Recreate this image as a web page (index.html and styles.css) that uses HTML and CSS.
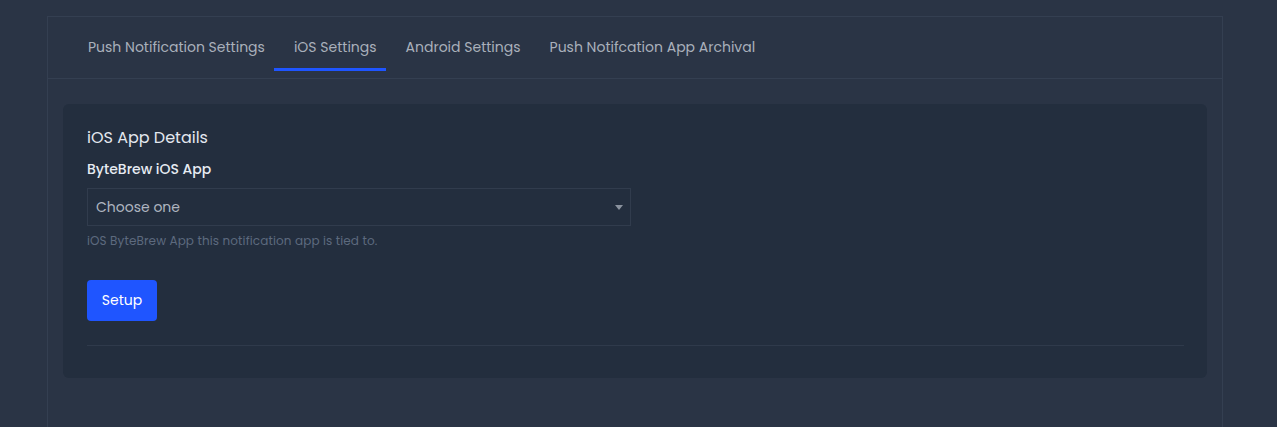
FILE: index.html
```html
<!DOCTYPE html>
<html lang="en">
<head>
    <meta charset="UTF-8">
    <meta name="viewport" content="width=device-width, initial-scale=1.0">
    <title>Push Notification App</title>
    <link rel="stylesheet" href="styles.css">
</head>
<body>
    <div class="panel">
        <nav class="tabs">
            <a class="tab" href="#">Push Notification Settings</a>
            <a class="tab active" href="#">iOS Settings</a>
            <a class="tab" href="#">Android Settings</a>
            <a class="tab" href="#">Push Notifcation App Archival</a>
        </nav>

        <div class="tab-body">
            <div class="card">
                <h3 class="card-title">iOS App Details</h3>
                <label class="field-label" for="ios-app">ByteBrew iOS App</label>
                <div class="select-wrap">
                    <select id="ios-app">
                        <option>Choose one</option>
                    </select>
                    <svg class="caret" width="8" height="5" viewBox="0 0 8 5">
                        <path d="M0 0h8L4 5z" fill="#8a929e"/>
                    </svg>
                </div>
                <p class="help">iOS ByteBrew App this notification app is tied to.</p>
                <button class="btn-primary" type="button">Setup</button>
                <hr class="divider">
            </div>
        </div>
    </div>
</body>
</html>
```

FILE: styles.css
```css
body {
    margin: 0;
    background-color: #2a3445;
    font-family: "Poppins", "Inter", "Noto Sans", sans-serif;
    color: #c9d0da;
    height: 427px;
    overflow: hidden;
}
.panel {
    margin: 16px 0 0 47px;
    width: 1174px;
    height: 410px;
    border: 1px solid #343f51;
    border-bottom: none;
}
.tabs {
    display: flex;
    padding: 0 0 7px 20px;
    border-bottom: 1px solid #343f51;
}
.tab {
    display: block;
    padding: 20px 9px 10px 20px;
    font-size: 14px;
    line-height: 21px;
    color: #a9b0bb;
    text-decoration: none;
    border-bottom: 3px solid transparent;
}
.tab.active {
    border-bottom-color: #1f55ff;
}
.tab-body {
    padding: 25px 15px 0 15px;
}
.card {
    background-color: #232e3e;
    border-radius: 6px;
    padding: 22px 23px 32px 24px;
}
.card-title {
    margin: 0;
    font-size: 16px;
    line-height: 24px;
    font-weight: 400;
    color: #e3e8ef;
}
.field-label {
    display: block;
    margin: 7px 0 7px;
    font-size: 14px;
    line-height: 24px;
    font-weight: 500;
    color: #e6ebf2;
}
.select-wrap {
    position: relative;
    width: 544px;
}
.select-wrap select {
    display: block;
    width: 100%;
    height: 38px;
    padding: 0 8px;
    background: #232e3e;
    border: 1px solid #313c4d;
    border-radius: 0;
    color: #aeb5c0;
    font-family: inherit;
    font-size: 14px;
    appearance: none;
    -webkit-appearance: none;
    outline: none;
}
.caret {
    position: absolute;
    right: 8px;
    top: 17px;
}
.help {
    margin: 6px 0 0;
    font-size: 12px;
    line-height: 18px;
    letter-spacing: 0.12px;
    color: #5d6a7e;
}
.btn-primary {
    display: block;
    margin-top: 30px;
    width: 70px;
    height: 41px;
    background-color: #1f55ff;
    border: none;
    border-radius: 4px;
    color: #fff;
    font-family: inherit;
    font-size: 14px;
    font-weight: 400;
}
.divider {
    margin: 24px 0 0;
    border: none;
    border-top: 1px solid #2f3a4b;
}
```
